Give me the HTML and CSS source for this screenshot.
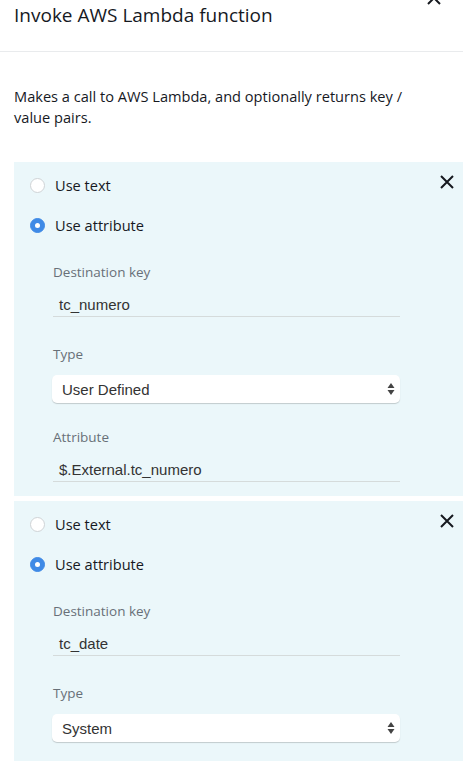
FILE: index.html
```html
<!DOCTYPE html>
<html>
<head>
<meta charset="utf-8">
<link rel="stylesheet" href="styles.css">
</head>
<body>
<header class="header">
  <h1 class="title">Invoke AWS Lambda function</h1>
  <svg class="header-close" width="14" height="14" viewBox="0 0 14 14"><path d="M1 1L13 13M13 1L1 13" stroke="#16191f" stroke-width="2" fill="none"/></svg>
</header>
<p class="desc">Makes a call to AWS Lambda, and optionally returns key / value pairs.</p>

<section class="panel">
  <div class="radio-row">
    <span class="radio"></span><span class="radio-label">Use text</span>
    <svg class="panel-close" width="14" height="14" viewBox="0 0 14 14"><path d="M1 1L13 13M13 1L1 13" stroke="#16191f" stroke-width="2" fill="none"/></svg>
  </div>
  <div class="radio-row">
    <span class="radio radio-on"></span><span class="radio-label">Use attribute</span>
  </div>
  <div class="field field-input">
    <div class="label">Destination key</div>
    <div class="input">tc_numero</div>
  </div>
  <div class="field field-select">
    <div class="label">Type</div>
    <div class="select"><span>User Defined</span><span class="arrows"><svg width="8" height="14" viewBox="0 0 8 14"><path d="M4 1L7.5 6H0.5Z M4 13L0.5 8H7.5Z" fill="#444"/></svg></span></div>
  </div>
  <div class="field field-input">
    <div class="label">Attribute</div>
    <div class="input">$.External.tc_numero</div>
  </div>
</section>

<section class="panel">
  <div class="radio-row">
    <span class="radio"></span><span class="radio-label">Use text</span>
    <svg class="panel-close" width="14" height="14" viewBox="0 0 14 14"><path d="M1 1L13 13M13 1L1 13" stroke="#16191f" stroke-width="2" fill="none"/></svg>
  </div>
  <div class="radio-row">
    <span class="radio radio-on"></span><span class="radio-label">Use attribute</span>
  </div>
  <div class="field field-input">
    <div class="label">Destination key</div>
    <div class="input">tc_date</div>
  </div>
  <div class="field field-select">
    <div class="label">Type</div>
    <div class="select"><span>System</span><span class="arrows"><svg width="8" height="14" viewBox="0 0 8 14"><path d="M4 1L7.5 6H0.5Z M4 13L0.5 8H7.5Z" fill="#444"/></svg></span></div>
  </div>
</section>
</body>
</html>
```
FILE: styles.css
```css
html, body {
  margin: 0;
  padding: 0;
  background: #ffffff;
}
body {
  font-family: "Open Sans", Lato, sans-serif;
  color: #16191f;
  width: 474px;
  overflow: hidden;
}
.header {
  display: flex;
  justify-content: space-between;
  align-items: flex-start;
  height: 52px;
  box-sizing: border-box;
  margin-right: 11px;
  padding-left: 14px;
  border-bottom: 1px solid #e9ebed;
}
.title {
  margin: 0;
  font-size: 19px;
  font-weight: 400;
  line-height: 30px;
  color: #16191f;
}
.header-close {
  margin-top: -9px;
  margin-right: 22px;
}
.desc {
  margin: 34px 0 0 14px;
  width: 400px;
  font-size: 14.6px;
  line-height: 21px;
  color: #16191f;
}
.panel {
  margin: 34px 11px 0 14px;
  background: #ebf7fa;
  padding: 3px 9px 11px 16px;
}
.panel + .panel {
  margin-top: 5px;
}
.radio-row {
  display: flex;
  align-items: center;
  height: 40px;
}
.radio {
  width: 15px;
  height: 15px;
  border-radius: 50%;
  border: 1px solid #cfd3d6;
  background: #ffffff;
  box-sizing: border-box;
  margin-right: 10px;
  flex: none;
}
.radio-on {
  background: #3f8ae6;
  border-color: #3f8ae6;
  display: flex;
  align-items: center;
  justify-content: center;
}
.radio-on::after {
  content: "";
  width: 5px;
  height: 5px;
  border-radius: 50%;
  background: #ffffff;
}
.radio-label {
  font-size: 14.6px;
  color: #16191f;
}
.panel-close {
  margin-left: auto;
  margin-top: -6px;
}
.field {
  display: flow-root;
  margin-left: 23px;
  width: 347px;
  margin-bottom: 24px;
}
.radio-row + .field {
  margin-top: 17px;
}
.field:last-child {
  margin-bottom: 0;
}
.field-select:last-child {
  margin-bottom: 8px;
}
.label {
  font-size: 13.5px;
  line-height: 20px;
  color: #687078;
  margin-bottom: 11px;
}
.input {
  height: 24px;
  box-sizing: border-box;
  border-bottom: 1px solid #d5dbdb;
  padding: 1px 0 0 6px;
  font-family: "Liberation Sans", Arial, sans-serif;
  font-size: 15px;
  line-height: 22px;
  color: #333333;
  margin-bottom: 3px;
}
.select {
  height: 28px;
  box-sizing: border-box;
  background: #ffffff;
  border-radius: 5px;
  box-shadow: 0 1px 1px rgba(0, 0, 0, 0.18);
  display: flex;
  align-items: center;
  justify-content: space-between;
  padding: 0 5px 0 10px;
  font-family: "Liberation Sans", Arial, sans-serif;
  font-size: 15px;
  color: #333333;
  margin-left: -1px;
  width: 348px;
}
.arrows {
  display: flex;
  align-items: center;
}
```
